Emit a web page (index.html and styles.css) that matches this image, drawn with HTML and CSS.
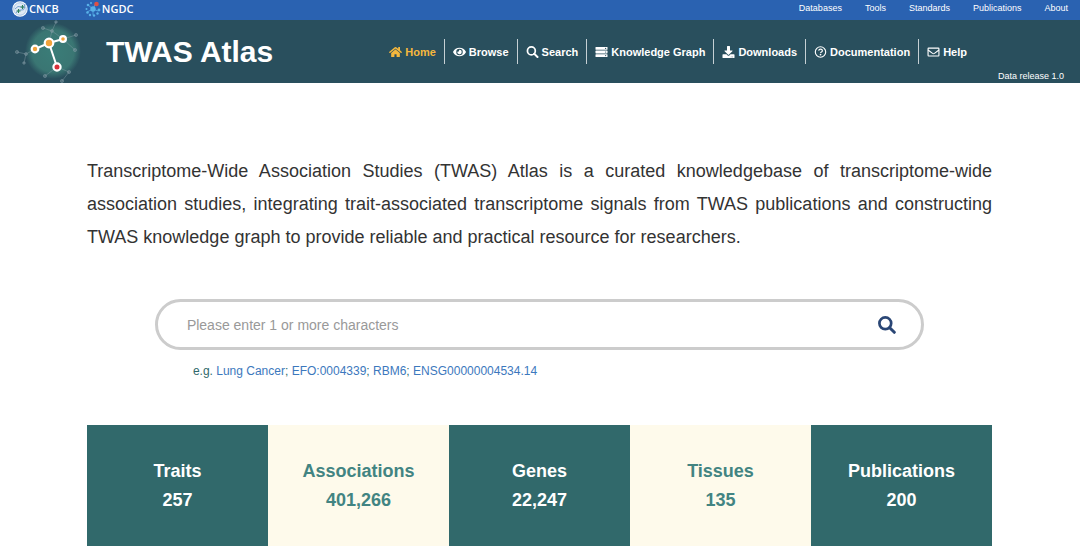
FILE: index.html
```html
<!DOCTYPE html>
<html lang="en">
<head>
    <meta charset="UTF-8">
    <meta name="viewport" content="width=device-width, initial-scale=1.0">
    <title>TWAS Atlas</title>
    <link rel="stylesheet" href="styles.css">
</head>
<body>
    <div class="topbar">
        <div class="topbar-logos">
            <a class="org" href="#">
                <svg class="org-icon" viewBox="0 0 16 16" aria-hidden="true">
                    <circle cx="8" cy="8" r="7.7" fill="#fff"/>
                    <circle cx="8" cy="8" r="6.3" fill="#dfe9f5" stroke="#9db9de" stroke-width=".8"/>
                    <path d="M3 8q3-4 6-2t4-3M4 12q2-4 5-3t4-3" fill="none" stroke="#5c8bc6" stroke-width=".8"/>
                    <path d="M8.500 6h4M10.500 4v4M4.500 10h4M6.500 8v4" stroke="#2d7f5b" stroke-width="1.100"/>
                </svg>
                CNCB
            </a>
            <a class="org" href="#">
                <svg class="org-icon" viewBox="0 0 16 16" aria-hidden="true">
                    <path d="M3 4l5 4 3-6M8 8l-6 3M8 8l5 2M8 8v6" stroke="#58b1e8" stroke-width=".8" fill="none"/>
                    <g fill="#58b1e8">
                        <circle cx="8" cy="8" r="2.7"/>
                        <circle cx="3" cy="4" r="1.3"/>
                        <circle cx="6" cy="2" r="1"/>
                        <circle cx="1.5" cy="8" r="1"/>
                        <circle cx="2.5" cy="11.5" r="1.3"/>
                        <circle cx="5" cy="14" r="1.2"/>
                        <circle cx="9" cy="14.5" r="1.2"/>
                        <circle cx="12.5" cy="12.5" r="1.2"/>
                        <circle cx="14" cy="9" r="1.4"/>
                    </g>
                    <circle cx="11.500" cy="3" r="2.300" fill="#dd5145"/>
                </svg>
                NGDC
            </a>
        </div>
        <div class="topbar-links">
            <a href="#">Databases</a>
            <a href="#">Tools</a>
            <a href="#">Standards</a>
            <a href="#">Publications</a>
            <a href="#">About</a>
        </div>
    </div>

    <header class="header">
        <svg class="logo" viewBox="0 0 66 63" aria-hidden="true">
            <defs>
                <radialGradient id="glow">
                    <stop offset="0" stop-color="#3a7d78"/>
                    <stop offset=".75" stop-color="#3a7673"/>
                    <stop offset="1" stop-color="#3a7673" stop-opacity="0"/>
                </radialGradient>
            </defs>
            <circle cx="38" cy="31" r="28" fill="url(#glow)"/>
            <g stroke="#8ca3ac" stroke-opacity=".4" fill="#8ca3ac" fill-opacity=".4">
                <path d="M28 8l9 3 4-9M37 11l11 8M37 11l-3 12M48 19l13-4M48 19l12 11M20 29l-9 5-9-2M11 34l-2 9M42 47L30 56M42 47l12 5-7 9" fill="none"/>
                <circle cx="28" cy="8" r="1.6"/>
                <circle cx="37" cy="11" r="1.5"/>
                <circle cx="41" cy="2" r="1.3"/>
                <circle cx="61" cy="15" r="1.6"/>
                <circle cx="60" cy="30" r="1.6"/>
                <circle cx="11" cy="34" r="1.5"/>
                <circle cx="2" cy="32" r="1.6"/>
                <circle cx="9" cy="43" r="1.3"/>
                <circle cx="30" cy="56" r="1.6"/>
                <circle cx="54" cy="52" r="1.6"/>
                <circle cx="47" cy="61" r="1.6"/>
            </g>
            <path d="M20 29l14-6 14-4M34 23l8 24" fill="none" stroke="#fff" stroke-width="2"/>
            <g stroke="#fff" stroke-width="2.2" fill="#f2a33c">
                <circle cx="20" cy="29" r="3.3"/>
                <circle cx="34" cy="23" r="4.3"/>
                <circle cx="48" cy="19" r="2.9"/>
                <circle cx="42" cy="47" r="3.6" fill="#d9303a"/>
            </g>
        </svg>
        <h1 class="brand">TWAS Atlas</h1>
        <nav class="nav">
            <a class="nav-item active" href="#">
                <svg viewBox="0 0 576 512" aria-hidden="true"><path d="M280.400 148.300L96 300.100V464a16 16 0 0 0 16 16l112-.3a16 16 0 0 0 16-16V368a16 16 0 0 1 16-16h64a16 16 0 0 1 16 16v95.700a16 16 0 0 0 16 16l112 .3a16 16 0 0 0 16-16V300L295.700 148.300a12 12 0 0 0-15.300 0zM571.600 251.500L488 182.600V44a12 12 0 0 0-12-12h-56a12 12 0 0 0-12 12v72.600L318.500 43a48 48 0 0 0-61 0L4.300 251.500a12 12 0 0 0-1.600 16.900l25.500 31a12 12 0 0 0 16.900 1.600L280.400 107.200a12 12 0 0 1 15.300 0L530.900 301a12 12 0 0 0 16.900-1.600l25.500-31a12 12 0 0 0-1.700-16.900z"/></svg>
                Home
            </a>
            <a class="nav-item" href="#">
                <svg viewBox="0 0 576 512" aria-hidden="true"><path d="M572.500 241.400C518.300 135.600 410.900 64 288 64S57.700 135.600 3.500 241.400a32 32 0 0 0 0 29.200C57.700 376.400 165.100 448 288 448s230.300-71.600 284.500-177.400a32 32 0 0 0 0-29.200zM288 400a144 144 0 1 1 0-288 144 144 0 0 1 0 288zm0-240a95 95 0 0 0-25 4 48 48 0 0 1-67 67 96 96 0 1 0 92-71z"/></svg>
                Browse
            </a>
            <a class="nav-item" href="#">
                <svg viewBox="0 0 512 512" aria-hidden="true"><circle cx="208" cy="208" r="168" fill="none" stroke="currentColor" stroke-width="74"/><path d="M330 330L470 470" stroke="currentColor" stroke-width="84" stroke-linecap="round"/></svg>
                Search
            </a>
            <a class="nav-item" href="#">
                <svg viewBox="0 0 512 512" aria-hidden="true"><rect y="42" width="512" height="122" rx="24"/><rect y="195" width="512" height="122" rx="24"/><rect y="348" width="512" height="122" rx="24"/><g fill="#294f5d"><circle cx="432" cy="103" r="26"/><circle cx="432" cy="256" r="26"/><circle cx="432" cy="409" r="26"/></g></svg>
                Knowledge Graph
            </a>
            <a class="nav-item" href="#">
                <svg viewBox="0 0 512 512" aria-hidden="true"><path d="M216 0h80c13 0 24 11 24 24v168h88c18 0 27 21 14 34L270 378c-7 7-20 7-28 0L90 226c-13-13-4-34 14-34h88V24c0-13 11-24 24-24zm296 376v112c0 13-11 24-24 24H24c-13 0-24-11-24-24V376c0-13 11-24 24-24h147l49 49c20 20 52 20 72 0l49-49h147c13 0 24 11 24 24zM388 464a20 20 0 1 0-40 0 20 20 0 0 0 40 0zm64 0a20 20 0 1 0-40 0 20 20 0 0 0 40 0z"/></svg>
                Downloads
            </a>
            <a class="nav-item" href="#">
                <svg viewBox="0 0 512 512" aria-hidden="true"><g fill="none" stroke="currentColor"><circle cx="256" cy="256" r="222" stroke-width="48"/><path d="M176 198c12-50 46-66 84-66 40 0 76 27 76 66 0 56-76 58-76 104" stroke-width="50"/></g><circle cx="258" cy="366" r="36"/></svg>
                Documentation
            </a>
            <a class="nav-item" href="#">
                <svg viewBox="0 0 512 512" aria-hidden="true"><g fill="none" stroke="currentColor" stroke-width="48"><rect x="24" y="88" width="464" height="336" rx="26"/><path d="M24 170l192 145q40 28 80 0l192-145"/></g></svg>
                Help
            </a>
        </nav>
        <span class="release">Data release 1.0</span>
    </header>

    <main class="container">
        <p class="intro">Transcriptome-Wide Association Studies (TWAS) Atlas is a curated knowledgebase of transcriptome-wide association studies, integrating trait-associated transcriptome signals from TWAS publications and constructing TWAS knowledge graph to provide reliable and practical resource for researchers.</p>

        <form class="search">
            <div class="search-box">
                <input class="search-input" type="text" aria-label="Search" placeholder="Please enter 1 or more characters">
                <button class="search-btn" type="button" aria-label="Search">
                    <svg viewBox="0 0 18 18" aria-hidden="true"><g fill="none" stroke="currentColor"><circle cx="7.300" cy="7.300" r="5.900" stroke-width="2.700"/><path d="M11.700 11.700l4.600 4.600" stroke-width="3" stroke-linecap="round"/></g></svg>
                </button>
            </div>
            <div class="examples">e.g. <a href="#">Lung Cancer</a>; <a href="#">EFO:0004339</a>; <a href="#">RBM6</a>; <a href="#">ENSG00000004534.14</a></div>
        </form>

        <div class="stats">
            <div class="stat"><span>Traits</span><span>257</span></div>
            <div class="stat"><span>Associations</span><span>401,266</span></div>
            <div class="stat"><span>Genes</span><span>22,247</span></div>
            <div class="stat"><span>Tissues</span><span>135</span></div>
            <div class="stat"><span>Publications</span><span>200</span></div>
        </div>
    </main>
</body>
</html>
```

FILE: styles.css
```css
* {
    box-sizing: border-box;
}

body {
    margin: 0;
    background-color: #fff;
    color: #333;
    font-family: "Liberation Sans", Arial, sans-serif;
}

a {
    text-decoration: none;
}

/* Top bar */
.topbar {
    display: flex;
    justify-content: space-between;
    height: 20px;
    padding: 0 12px;
    background-color: #2a62b1;
}

.topbar a {
    color: #fff;
}

.topbar-logos {
    display: flex;
    gap: 26px;
}

.org {
    display: flex;
    align-items: center;
    gap: 1px;
    height: 17px;
    font-family: "Open Sans", sans-serif;
    font-size: 11px;
    font-weight: 600;
}

.org-icon {
    width: 16px;
    height: 16px;
}

.topbar-links {
    display: flex;
    gap: 23px;
    font-size: 9px;
    line-height: 17px;
}

/* Header */
.header {
    position: relative;
    display: flex;
    align-items: center;
    height: 63px;
    padding-left: 15px;
    background-color: #294f5d;
    color: #fff;
}

.logo {
    width: 66px;
    height: 63px;
}

.brand {
    margin: 0 0 0 25px;
    font-size: 30px;
    line-height: 36px;
    white-space: nowrap;
}

.nav {
    display: flex;
    margin-left: 108px;
}

.nav-item {
    display: flex;
    align-items: center;
    gap: 3px;
    height: 25px;
    padding: 0 8px;
    border-right: 1px solid #c5d0d4;
    color: #fff;
    font-size: 11px;
    font-weight: bold;
    white-space: nowrap;
}

.nav-item:last-child {
    border-right: none;
}

.nav-item.active {
    color: #f5b83d;
}

.nav-item svg {
    width: 13px;
    height: 12px;
    fill: currentColor;
}

.release {
    position: absolute;
    right: 16px;
    bottom: 1px;
    font-size: 9px;
    line-height: 12px;
}

/* Content */
.container {
    padding: 72px 88px 0 87px;
}

.intro {
    margin: 0;
    font-size: 18px;
    line-height: 33px;
    text-align: justify;
}

.search {
    width: 85%;
    margin: 45px auto 0;
}

.search-box {
    display: flex;
    align-items: center;
    height: 51px;
    padding: 0 25px 0 29px;
    border: 3px solid #ccc;
    border-radius: 26px;
}

.search-input {
    flex: 1;
    padding: 0;
    border: none;
    outline: none;
    font-family: inherit;
    font-size: 14px;
}

.search-input::placeholder {
    color: #999;
}

.search-btn {
    padding: 0;
    border: none;
    background: none;
    color: #2a4675;
    cursor: pointer;
}

.search-btn svg {
    display: block;
    width: 18px;
    height: 18px;
}

.examples {
    margin: 12px 0 0 38px;
    color: #31696b;
    font-size: 12px;
    line-height: 18px;
}

.examples a {
    color: #3c78bd;
}

/* Stats */
.stats {
    display: grid;
    grid-template-columns: repeat(5, 1fr);
    margin-top: 45px;
}

.stat {
    display: flex;
    flex-direction: column;
    align-items: center;
    padding: 32px 0 31px;
    background-color: #31696b;
    color: #fff;
    font-size: 18px;
    font-weight: bold;
    line-height: 29px;
}

.stat:nth-child(even) {
    background-color: #fefaeb;
    color: #428482;
}
```
